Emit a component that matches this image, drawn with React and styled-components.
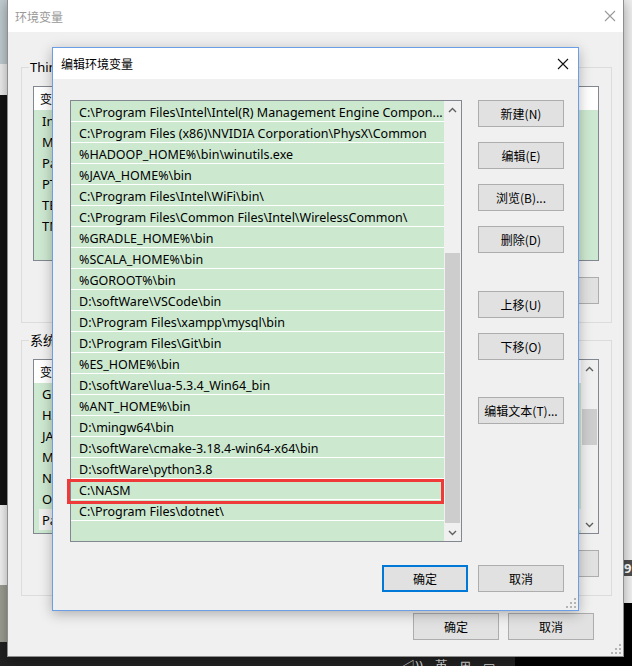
import styled, { createGlobalStyle } from "styled-components";

const GlobalStyle = createGlobalStyle`
  html, body { margin: 0; padding: 0; background: #000; }
  body {
    font-family: "Noto Sans", "Noto Sans CJK SC", sans-serif;
    font-size: 12px;
    color: #000;
  }
  * { box-sizing: border-box; }
`;

const paths = [
  "C:\\Program Files\\Intel\\Intel(R) Management Engine Compon...",
  "C:\\Program Files (x86)\\NVIDIA Corporation\\PhysX\\Common",
  "%HADOOP_HOME%\\bin\\winutils.exe",
  "%JAVA_HOME%\\bin",
  "C:\\Program Files\\Intel\\WiFi\\bin\\",
  "C:\\Program Files\\Common Files\\Intel\\WirelessCommon\\",
  "%GRADLE_HOME%\\bin",
  "%SCALA_HOME%\\bin",
  "%GOROOT%\\bin",
  "D:\\softWare\\VSCode\\bin",
  "D:\\Program Files\\xampp\\mysql\\bin",
  "D:\\Program Files\\Git\\bin",
  "%ES_HOME%\\bin",
  "D:\\softWare\\lua-5.3.4_Win64_bin",
  "%ANT_HOME%\\bin",
  "D:\\mingw64\\bin",
  "D:\\softWare\\cmake-3.18.4-win64-x64\\bin",
  "D:\\softWare\\python3.8",
  "C:\\NASM",
  "C:\\Program Files\\dotnet\\",
];

const userVars = ["IntelliJ IDEA", "MOZ_PLUGIN_PATH", "Path", "PTOOLS", "TEMP", "TMP"];
const sysVars = ["GRADLE_HOME", "HADOOP_HOME", "JAVA_HOME", "MAVEN_HOME", "NUMBER_OF_PROCESSORS", "OS", "Path"];

const Desktop = styled.div`
  position: relative;
  width: 632px;
  height: 666px;
  overflow: hidden;
  background:
    linear-gradient(#bfcbcf 0 64px, #ededed 64px 95px, #131313 95px 505px, #f3f3f3 505px 585px, #9c9e92 585px 642px, #222 642px) left top / 8px 100% no-repeat,
    linear-gradient(#eeeeee 0 560px, #4d4d4d 560px 576px, #f2f2f2 576px 603px, #000 603px) right top / 9px 100% no-repeat,
    linear-gradient(90deg, #222 0 515px, #000 515px) left bottom / 100% 12px no-repeat,
    #222;
`;

const Clock = styled.div`
  position: absolute;
  right: -2px;
  top: 560px;
  width: 10px;
  height: 16px;
  color: #fff;
  font-size: 13px;
  line-height: 16px;
  font-weight: 700;
`;

const Tray = styled.div`
  position: absolute;
  left: 402px;
  top: 656px;
  display: flex;
  gap: 12px;
  color: #d8d8d8;
  font-size: 13px;
  line-height: 18px;
`;

const Window = styled.div`
  position: absolute;
  left: ${(p) => p.$x}px;
  top: ${(p) => p.$y}px;
  width: ${(p) => p.$w}px;
  height: ${(p) => p.$h}px;
  display: flex;
  flex-direction: column;
  background: #f0f0f0;
  border: 1px solid ${(p) => (p.$active ? "#6c9ee5" : "#8e8e8e")};
  box-shadow: 0 3px 12px rgba(0, 0, 0, ${(p) => (p.$active ? 0.28 : 0.35)});
`;

const TitleBar = styled.div`
  height: ${(p) => p.$h}px;
  flex: none;
  display: flex;
  align-items: center;
  justify-content: space-between;
  padding: 0 ${(p) => p.$pr}px 0 ${(p) => p.$pl}px;
  background: #fff;
  color: ${(p) => (p.$active ? "#000" : "#999")};
  font-family: "Noto Sans CJK SC", sans-serif;
  font-size: 12px;
`;

const CloseIcon = ({ color }) => (
  <svg width="12" height="12" viewBox="0 0 12 12">
    <path d="M1 1 L11 11 M11 1 L1 11" stroke={color} strokeWidth="1.1" fill="none" />
  </svg>
);

const Grip = styled.svg`
  position: absolute;
  right: 2px;
  bottom: 2px;
`;

const ResizeGrip = () => (
  <Grip width="10" height="10" viewBox="0 0 10 10">
    {[
      [8, 0], [8, 4], [4, 4], [8, 8], [4, 8], [0, 8],
    ].map(([x, y]) => (
      <rect key={`${x}-${y}`} x={x} y={y} width="2" height="2" fill="#b4b4b4" />
    ))}
  </Grip>
);

/* ---------- background window ---------- */

const BgBody = styled.div`
  flex: 1;
  display: flex;
  flex-direction: column;
  padding: 35px 11px 0 13px;
`;

const Group = styled.div`
  position: relative;
  border: 1px solid #dcdcdc;
  padding: 18px 12px 18px 11px;
  display: flex;
  flex-direction: column;
  gap: 16px;
  margin-bottom: 17px;
`;

const Legend = styled.span`
  position: absolute;
  left: 7px;
  top: -10px;
  padding: 0 1px;
  background: #f0f0f0;
  font-family: "Noto Sans", "Noto Sans CJK SC", sans-serif;
  font-size: 13px;
  line-height: 18px;
`;

const BgList = styled.div`
  height: 175px;
  display: flex;
  border: 1px solid #828790;
  background: #cde8d0;
`;

const BgColumn = styled.div`
  flex: 1;
  display: flex;
  flex-direction: column;
`;

const BgHeader = styled.div`
  height: 23px;
  display: flex;
  align-items: center;
  padding-left: 6px;
  background: #fff;
  font-family: "Noto Sans CJK SC", sans-serif;
`;

const BgRow = styled.div`
  height: 21px;
  display: flex;
  align-items: center;
  margin-left: 5px;
  padding: 1px 0 0 3px;
  background: ${(p) => (p.$selected ? "#f0f0f0" : "transparent")};
  font-size: 13px;
`;

const GroupButtons = styled.div`
  display: flex;
  justify-content: flex-end;
  gap: 9px;
`;

const Footer = styled.div`
  display: flex;
  justify-content: flex-end;
  gap: ${(p) => p.$gap}px;
  padding-right: ${(p) => p.$pr || 0}px;
  margin-top: ${(p) => p.$mt || 0}px;
`;

/* ---------- shared controls ---------- */

const Button = styled.button`
  width: 86px;
  height: 27px;
  flex: none;
  margin: ${(p) => p.$mt || 0}px 0 0 0;
  padding: 0;
  background: #e1e1e1;
  border: ${(p) => (p.$primary ? "2px solid #0078d7" : "1px solid #adadad")};
  font-family: "Noto Sans CJK SC", "Noto Sans", sans-serif;
  font-size: 12px;
  color: #000;
`;

const ScrollBar = styled.div`
  width: 17px;
  flex: none;
  display: flex;
  flex-direction: column;
  background: #f0f0f0;
`;

const Arrow = styled.div`
  height: 17px;
  flex: none;
  display: flex;
  align-items: center;
  justify-content: center;
`;

const Track = styled.div`
  flex: 1;
  display: flex;
  flex-direction: column;
  padding: ${(p) => p.$top}px 1px 0;
`;

const Thumb = styled.div`
  height: ${(p) => p.$h}px;
  background: #cdcdcd;
`;

const Chevron = ({ down }) => (
  <svg width="9" height="6" viewBox="0 0 9 6">
    <path
      d={down ? "M1 1 L4.5 4.5 L8 1" : "M1 5 L4.5 1.5 L8 5"}
      stroke="#606060"
      strokeWidth="1.4"
      fill="none"
    />
  </svg>
);

const Scroll = ({ top, thumb }) => (
  <ScrollBar>
    <Arrow><Chevron /></Arrow>
    <Track $top={top}>
      <Thumb $h={thumb} />
    </Track>
    <Arrow><Chevron down /></Arrow>
  </ScrollBar>
);

/* ---------- edit dialog ---------- */

const DialogBody = styled.div`
  flex: 1;
  position: relative;
  display: flex;
  flex-direction: column;
  padding: 21px 14px 18px 17px;
`;

const MainRow = styled.div`
  display: flex;
  gap: 16px;
`;

const PathList = styled.div`
  position: relative;
  width: 392px;
  height: 442px;
  display: flex;
  border: 1px solid #828790;
`;

const Rows = styled.div`
  flex: 1;
  min-width: 0;
  background: #cce8cf;
`;

const PathRow = styled.div`
  height: 21px;
  padding-left: 8px;
  border-bottom: 1px solid #fff;
  line-height: 24px;
  white-space: nowrap;
  overflow: hidden;
  font-size: 12.5px;
`;

const Highlight = styled.div`
  position: absolute;
  left: -4px;
  top: 378px;
  width: 377px;
  height: 25px;
  border: 3px solid #ef3a3a;
`;

const ButtonColumn = styled.div`
  display: flex;
  flex-direction: column;
  gap: 15px;
`;

export default function App() {
  return (
    <Desktop>
      <GlobalStyle />
      <Clock>9</Clock>
      <Tray>
        <span>◁))</span>
        <span>英</span>
        <span>⊞</span>
        <span>▭</span>
      </Tray>

      <Window $x={7} $y={-1} $w={617} $h={658}>
        <TitleBar $h={32} $pl={7} $pr={7}>
          <span>环境变量</span>
          <CloseIcon color="#9a9a9a" />
        </TitleBar>
        <BgBody>
          <Group>
            <Legend>ThinkPad 的用户变量(U)</Legend>
            <BgList>
              <BgColumn>
                <BgHeader>变量</BgHeader>
                {userVars.map((v) => (
                  <BgRow key={v}>{v}</BgRow>
                ))}
              </BgColumn>
            </BgList>
            <GroupButtons>
              <Button>新建(N)...</Button>
              <Button>编辑(E)...</Button>
              <Button>删除(D)</Button>
            </GroupButtons>
          </Group>
          <Group>
            <Legend>系统变量(S)</Legend>
            <BgList>
              <BgColumn>
                <BgHeader>变量</BgHeader>
                {sysVars.map((v) => (
                  <BgRow key={v} $selected={v === "Path"}>{v}</BgRow>
                ))}
              </BgColumn>
              <Scroll top={32} thumb={36} />
            </BgList>
            <GroupButtons>
              <Button>新建(W)...</Button>
              <Button>编辑(I)...</Button>
              <Button>删除(L)</Button>
            </GroupButtons>
          </Group>
          <Footer $gap={9} $pr={18}>
            <Button>确定</Button>
            <Button>取消</Button>
          </Footer>
        </BgBody>
        <ResizeGrip />
      </Window>

      <Window $active $x={52} $y={47} $w={527} $h={564}>
        <TitleBar $active $h={31} $pl={8} $pr={9}>
          <span>编辑环境变量</span>
          <CloseIcon color="#111" />
        </TitleBar>
        <DialogBody>
          <MainRow>
            <PathList>
              <Rows>
                {paths.map((p) => (
                  <PathRow key={p}>{p}</PathRow>
                ))}
              </Rows>
              <Scroll top={135} thumb={270} />
              <Highlight />
            </PathList>
            <ButtonColumn>
              <Button>新建(N)</Button>
              <Button>编辑(E)</Button>
              <Button>浏览(B)...</Button>
              <Button>删除(D)</Button>
              <Button $mt={23}>上移(U)</Button>
              <Button>下移(O)</Button>
              <Button $mt={22}>编辑文本(T)...</Button>
            </ButtonColumn>
          </MainRow>
          <Footer $gap={10} $mt={23}>
            <Button $primary>确定</Button>
            <Button>取消</Button>
          </Footer>
          <ResizeGrip />
        </DialogBody>
      </Window>
    </Desktop>
  );
}
